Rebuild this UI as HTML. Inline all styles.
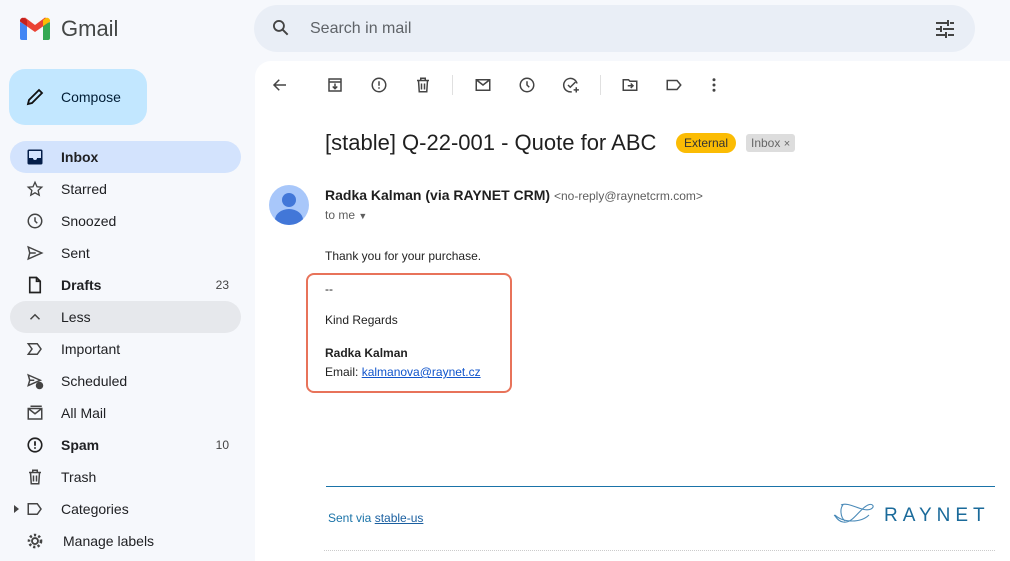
<!DOCTYPE html>
<html><head><meta charset="utf-8"><style>
*{margin:0;padding:0;box-sizing:border-box}
body{width:1010px;height:561px;overflow:hidden;background:#f6f8fc;font-family:"Liberation Sans",Arial,sans-serif;position:relative;color:#202124}
.abs{position:absolute}
.nav{position:absolute;left:10px;width:231px;height:32px;border-radius:16px;font-size:14px;color:#202124}
.nav .t{position:absolute;left:51px;top:8px}
.nav .c{position:absolute;right:12px;top:9px;font-size:12px;color:#444}
.nav svg{position:absolute;left:16px;top:7px}
.b{font-weight:bold}
.tb svg{position:absolute;top:76px}
</style></head><body>
<!-- logo -->
<svg class="abs" style="left:20px;top:17px" width="30" height="23" viewBox="0 0 30 23">
<path d="M0 5v16a2 2 0 0 0 2 2h5V8z" fill="#4285f4"/>
<path d="M30 5v16a2 2 0 0 1-2 2h-5V8z" fill="#34a853"/>
<path d="M0 4.5L15 15 30 4.5 30 3 25 0.5 15 8 5 0.5 0 3z" fill="#ea4335"/>
<path d="M23 3v6l7-4.5V4c0-3-3-4-5-2.5z" fill="#fbbc04"/>
<path d="M7 3v6L0 4.5V4c0-3 3-4 5-2.5z" fill="#c5221f"/>
</svg>
<div class="abs" style="left:61px;top:16px;font-size:22px;color:#444746">Gmail</div>
<!-- search -->
<div class="abs" style="left:254px;top:5px;width:721px;height:47px;background:#e9eef6;border-radius:24px"></div>
<svg class="abs" style="left:271px;top:18px" width="20" height="20" viewBox="0 0 24 24"><circle cx="9.5" cy="9.5" r="6" fill="none" stroke="#444" stroke-width="2.2"/><path d="M14 14l6 6" stroke="#444" stroke-width="2.4"/></svg>
<div class="abs" style="left:310px;top:20px;font-size:16px;color:#5f6368">Search in mail</div>
<svg class="abs" style="left:935px;top:19px" width="20" height="20" viewBox="0 0 20 20" stroke="#444" stroke-width="2"><path d="M1 4h11M15 4h4M1 10h4M8 10h11M1 16h9M13 16h6M13 1v6M6 7v6M11 13v6" /></svg>
<!-- compose -->
<div class="abs" style="left:9px;top:69px;width:138px;height:56px;background:#c2e7ff;border-radius:16px"></div>
<svg class="abs" style="left:25px;top:87px" width="20" height="20" viewBox="0 0 20 20"><path d="M3 17l1-4L14 3l3 3L7 16z" fill="none" stroke="#111" stroke-width="1.8"/></svg>
<div class="abs" style="left:61px;top:89px;font-size:14px;color:#001d35">Compose</div>
<!-- nav -->
<div class="nav b" style="top:141px;background:#d3e3fd"><svg width="18" height="18" viewBox="0 0 18 18"><rect x="1.5" y="1.5" width="15" height="15" rx="1.5" fill="#041e49"/><path d="M3 10h4a2 2 0 0 0 4 0h4V3H3z" fill="#d3e3fd"/></svg><span class="t">Inbox</span></div>
<div class="nav" style="top:173px"><svg width="18" height="18" viewBox="0 0 24 24"><path d="M12 3l2.7 6 6.3.6-4.8 4.3 1.4 6.3L12 17l-5.6 3.2 1.4-6.3L3 9.6 9.3 9z" fill="none" stroke="#444" stroke-width="1.8"/></svg><span class="t">Starred</span></div>
<div class="nav" style="top:205px"><svg width="18" height="18" viewBox="0 0 24 24"><circle cx="12" cy="12" r="9" fill="none" stroke="#444" stroke-width="2"/><path d="M12 7v5l3 3" fill="none" stroke="#444" stroke-width="2"/></svg><span class="t">Snoozed</span></div>
<div class="nav" style="top:237px"><svg width="18" height="18" viewBox="0 0 24 24"><path d="M3 4l18 8-18 8 2-8zM5 12h8" fill="none" stroke="#444" stroke-width="2"/></svg><span class="t">Sent</span></div>
<div class="nav b" style="top:269px"><svg width="18" height="18" viewBox="0 0 24 24"><path d="M5 2h9l5 5v15H5zM14 2v5h5" fill="none" stroke="#222" stroke-width="2.2"/></svg><span class="t">Drafts</span><span class="c" style="font-weight:normal">23</span></div>
<div class="nav" style="top:301px;background:#e6e8ec"><svg width="18" height="18" viewBox="0 0 24 24"><path d="M6 15l6-6 6 6" fill="none" stroke="#444" stroke-width="2"/></svg><span class="t">Less</span></div>
<div class="nav" style="top:333px"><svg width="18" height="18" viewBox="0 0 24 24"><path d="M3 5h12l5 7-5 7H3l5-7z" fill="none" stroke="#444" stroke-width="2"/></svg><span class="t">Important</span></div>
<div class="nav" style="top:365px"><svg width="18" height="18" viewBox="0 0 24 24"><path d="M3 4l16 7-16 7 2-7zM5 11h6" fill="none" stroke="#444" stroke-width="2"/><circle cx="18" cy="18" r="5" fill="#444"/></svg><span class="t">Scheduled</span></div>
<div class="nav" style="top:397px"><svg width="18" height="18" viewBox="0 0 24 24"><path d="M3 6h18v14H3zM3 6l9 7 9-7" fill="none" stroke="#444" stroke-width="2"/><path d="M6 3h15" stroke="#444" stroke-width="2"/></svg><span class="t">All Mail</span></div>
<div class="nav b" style="top:429px"><svg width="18" height="18" viewBox="0 0 24 24"><circle cx="12" cy="12" r="9" fill="none" stroke="#222" stroke-width="2.2"/><path d="M12 7v6M12 15v2" stroke="#222" stroke-width="2.4"/></svg><span class="t">Spam</span><span class="c" style="font-weight:normal">10</span></div>
<div class="nav" style="top:461px"><svg width="18" height="18" viewBox="0 0 24 24"><path d="M4 6h16M9 6V3h6v3M6 6l1 15h10l1-15M10 10v8M14 10v8" fill="none" stroke="#444" stroke-width="2"/></svg><span class="t">Trash</span></div>
<div class="abs" style="left:14px;top:505px;border-left:5px solid #444;border-top:4px solid transparent;border-bottom:4px solid transparent"></div>
<div class="nav" style="top:493px"><svg width="18" height="18" viewBox="0 0 24 24"><path d="M3 5h12l5 7-5 7H3z" fill="none" stroke="#444" stroke-width="2"/></svg><span class="t">Categories</span></div>
<div class="nav" style="top:525px"><svg width="18" height="18" viewBox="0 0 24 24"><circle cx="12" cy="12" r="4" fill="none" stroke="#444" stroke-width="2.5"/><circle cx="12" cy="12" r="8" fill="none" stroke="#444" stroke-width="3.5" stroke-dasharray="3 3"/></svg><span class="t" style="left:53px">Manage labels</span></div>
<!-- main -->
<div class="abs" style="left:255px;top:61px;width:755px;height:500px;background:#fff;border-radius:16px 0 0 0"></div>
<div class="tb">
<svg style="left:271px" width="18" height="18" viewBox="0 0 24 24"><path d="M20 12H5M11 5l-7 7 7 7" fill="none" stroke="#444" stroke-width="2"/></svg>
<svg style="left:326px" width="18" height="18" viewBox="0 0 24 24"><path d="M4 4h16v16H4zM4 8h16M12 10v7M9 14l3 3 3-3" fill="none" stroke="#444" stroke-width="2"/></svg>
<svg style="left:370px" width="18" height="18" viewBox="0 0 24 24"><circle cx="12" cy="12" r="9" fill="none" stroke="#444" stroke-width="2"/><path d="M12 7v6M12 15v2" stroke="#444" stroke-width="2"/></svg>
<svg style="left:414px" width="18" height="18" viewBox="0 0 24 24"><path d="M4 6h16M9 6V3h6v3M6 6l1 15h10l1-15M10 10v8M14 10v8" fill="none" stroke="#444" stroke-width="2"/></svg>
<svg style="left:474px" width="18" height="18" viewBox="0 0 24 24"><path d="M3 5h18v14H3zM3 5l9 7 9-7" fill="none" stroke="#444" stroke-width="2"/></svg>
<svg style="left:518px" width="18" height="18" viewBox="0 0 24 24"><circle cx="12" cy="12" r="9" fill="none" stroke="#444" stroke-width="2"/><path d="M12 7v5l3 3" fill="none" stroke="#444" stroke-width="2"/></svg>
<svg style="left:562px" width="18" height="18" viewBox="0 0 24 24"><path d="M20 10a9 9 0 1 0-7 11" fill="none" stroke="#444" stroke-width="2"/><path d="M8 12l3 3 7-7M19 15v7M15.5 18.5h7" fill="none" stroke="#444" stroke-width="2"/></svg>
<svg style="left:621px" width="18" height="18" viewBox="0 0 24 24"><path d="M3 5h7l2 2h9v12H3zM9 13h7M13 10l3 3-3 3" fill="none" stroke="#444" stroke-width="2"/></svg>
<svg style="left:665px" width="18" height="18" viewBox="0 0 24 24"><path d="M3 6h13l5 6-5 6H3z" fill="none" stroke="#444" stroke-width="2"/></svg>
<svg style="left:705px" width="18" height="18" viewBox="0 0 24 24"><circle cx="12" cy="5" r="2" fill="#444"/><circle cx="12" cy="12" r="2" fill="#444"/><circle cx="12" cy="19" r="2" fill="#444"/></svg>
</div>
<div class="abs" style="left:452px;top:75px;width:1px;height:20px;background:#e0e0e0"></div>
<div class="abs" style="left:600px;top:75px;width:1px;height:20px;background:#e0e0e0"></div>
<div class="abs" style="left:325px;top:130px;font-size:22px;color:#1f1f1f">[stable] Q-22-001 - Quote for ABC</div>
<div class="abs" style="left:676px;top:133px;height:20px;padding:0 8px;background:#fbbc04;border-radius:10px;font-size:12px;line-height:20px;color:#333">External</div>
<div class="abs" style="left:746px;top:134px;height:18px;padding:0 5px;background:#ddd;border-radius:3px;font-size:12px;line-height:18px;color:#666">Inbox <span style="font-size:11px">×</span></div>
<div class="abs" style="left:269px;top:185px;width:40px;height:40px;border-radius:50%;background:#a8c7fa;overflow:hidden">
<div class="abs" style="left:13px;top:8px;width:14px;height:14px;border-radius:50%;background:#4277d8"></div>
<div class="abs" style="left:6px;top:24px;width:28px;height:22px;border-radius:50%;background:#4277d8"></div></div>
<div class="abs" style="left:325px;top:187px;font-size:14px;font-weight:bold;color:#1f1f1f">Radka Kalman (via RAYNET CRM) <span style="font-weight:normal;font-size:12px;color:#5e5e5e">&lt;no-reply@raynetcrm.com&gt;</span></div>
<div class="abs" style="left:325px;top:208px;font-size:12px;color:#5e5e5e">to me <span style="font-size:9px">▼</span></div>
<div class="abs" style="left:325px;top:249px;font-size:12px;color:#222">Thank you for your purchase.</div>
<div class="abs" style="left:306px;top:273px;width:206px;height:120px;border:2px solid #e8735a;border-radius:8px"></div>
<div class="abs" style="left:325px;top:282px;font-size:12px;color:#222">--</div>
<div class="abs" style="left:325px;top:313px;font-size:12px;color:#222">Kind Regards</div>
<div class="abs" style="left:325px;top:346px;font-size:12px;font-weight:bold;color:#222">Radka Kalman</div>
<div class="abs" style="left:325px;top:365px;font-size:12px;color:#222">Email: <span style="color:#1155cc;text-decoration:underline">kalmanova@raynet.cz</span></div>
<div class="abs" style="left:326px;top:486px;width:669px;height:1px;background:#1a73a8"></div>
<div class="abs" style="left:328px;top:511px;font-size:12px;color:#1a73a8">Sent via <span style="text-decoration:underline;color:#1a5fa0">stable-us</span></div>
<svg class="abs" style="left:832px;top:501px" width="44" height="26" viewBox="0 0 44 26"><path d="M9 4c8-4 22 8 30 4 4-2 2-6-3-4C27 8 21 23 11 21 5 20 4 15 2 14M11 4c-3 3-3 12 2 16M3 14c8 8 26 8 34 0" fill="none" stroke="#4a8ab8" stroke-width="1.1"/></svg>
<div class="abs" style="left:884px;top:505px;font-size:19px;letter-spacing:5px;color:#1a6a9a">RAYNET</div>
<div class="abs" style="left:324px;top:550px;width:671px;border-top:1px dotted #ccc"></div>
</body></html>
